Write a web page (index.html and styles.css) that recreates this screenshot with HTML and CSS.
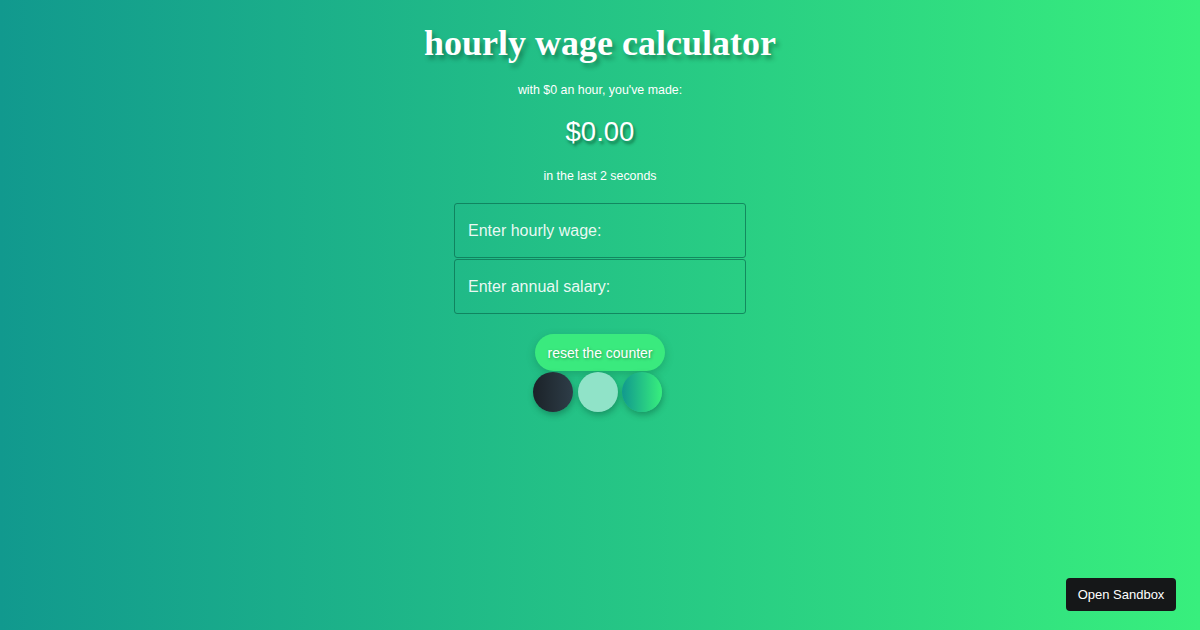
FILE: index.html
```html
<!DOCTYPE html>
<html>
<head>
<meta charset="utf-8">
<link rel="stylesheet" href="styles.css">
</head>
<body>
<main class="app">
  <h1 class="title">hourly wage calculator</h1>
  <p class="note">with $0 an hour, you've made:</p>
  <p class="amount">$0.00</p>
  <p class="note">in the last 2 seconds</p>
  <div class="fields">
    <input class="field" type="text" placeholder="Enter hourly wage:">
    <input class="field" type="text" placeholder="Enter annual salary:">
  </div>
  <button class="reset">reset the counter</button>
  <div class="themes">
    <span class="theme theme-dark"></span>
    <span class="theme theme-mint"></span>
    <span class="theme theme-grad"></span>
  </div>
</main>
<a class="sandbox">Open Sandbox</a>
</body>
</html>
```
FILE: styles.css
```css
html, body {
  margin: 0;
  height: 100%;
}
body {
  background: linear-gradient(to right, #11998e, #38ef7d);
  font-family: "Liberation Sans", Arial, sans-serif;
  color: #fff;
  overflow: hidden;
}
.app {
  display: flex;
  flex-direction: column;
  align-items: center;
  padding-top: 21px;
}
.title {
  font-family: "Liberation Serif", "Times New Roman", serif;
  font-weight: bold;
  font-size: 36px;
  line-height: 44px;
  margin: 0 0 18px;
  text-shadow: 3px 4px 4px rgba(0, 40, 20, 0.35);
}
.note {
  font-size: 12.4px;
  line-height: 14px;
  margin: 0;
}
.amount {
  font-size: 27.5px;
  line-height: 30px;
  margin: 20px 0 22px;
  text-shadow: 2px 3px 3px rgba(0, 60, 30, 0.55);
}
.fields {
  display: flex;
  flex-direction: column;
  gap: 1px;
  margin-top: 20px;
}
.field {
  box-sizing: border-box;
  width: 292px;
  height: 55px;
  padding: 0 13px;
  background: transparent;
  border: 1px solid rgba(10, 110, 80, 0.7);
  border-radius: 3px;
  font-family: "Liberation Sans", Arial, sans-serif;
  font-size: 16px;
  color: #fff;
  outline: none;
}
.field::placeholder {
  color: rgba(255, 255, 255, 0.92);
}
.reset {
  margin-top: 20px;
  height: 37px;
  padding: 0 12px;
  border: none;
  border-radius: 19px;
  background: #3aea7e;
  color: #fff;
  font-family: "Liberation Sans", Arial, sans-serif;
  font-size: 14px;
  text-shadow: 1px 1px 3px rgba(0, 0, 0, 0.35);
  box-shadow: 0 3px 8px rgba(0, 80, 40, 0.25);
}
.themes {
  display: flex;
  gap: 4.5px;
  margin: 1px 5px 0 0;
}
.theme {
  width: 40px;
  height: 40px;
  border-radius: 50%;
  box-shadow: 1px 3px 6px rgba(0, 60, 40, 0.35);
}
.theme-dark {
  background: linear-gradient(to right, #1b2228, #2e3d48);
}
.theme-mint {
  background: #90e3c8;
}
.theme-grad {
  background: linear-gradient(to right, #11998e, #38ef7d);
}
.sandbox {
  position: fixed;
  right: 24px;
  bottom: 19px;
  width: 110px;
  height: 33px;
  display: flex;
  align-items: center;
  justify-content: center;
  background: #151718;
  border-radius: 4px;
  font-size: 13px;
  color: #fff;
}
```
